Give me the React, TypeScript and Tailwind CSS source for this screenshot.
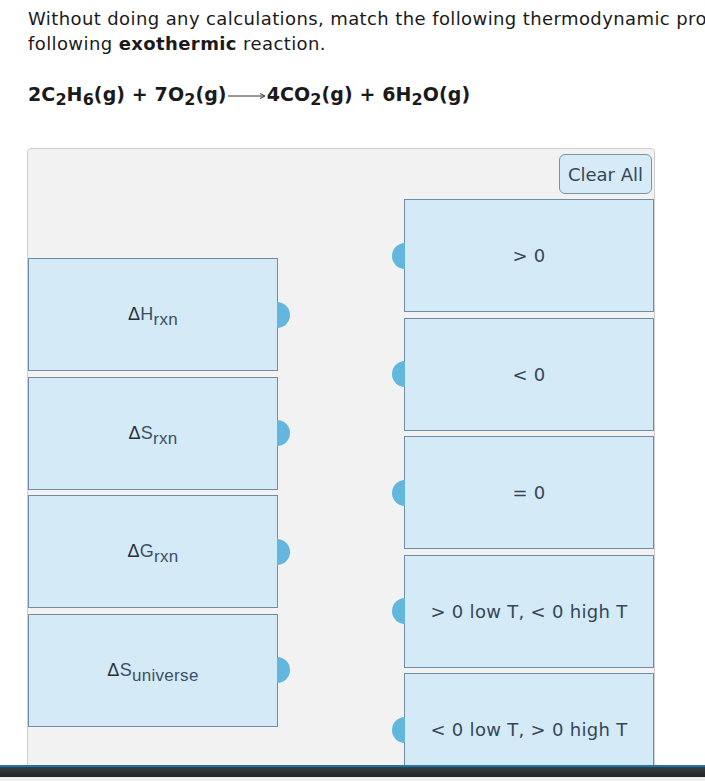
import React from "react";

type Label = { sym: string; sub: string };

const properties: Label[] = [
  { sym: "H", sub: "rxn" },
  { sym: "S", sub: "rxn" },
  { sym: "G", sub: "rxn" },
  { sym: "S", sub: "universe" },
];

const values = ["> 0", "< 0", "= 0", "> 0 low T, < 0 high T", "< 0 low T, > 0 high T"];

function Arrow() {
  return (
    <svg width="38" height="10" viewBox="0 0 38 10" className="inline-block mx-[1px] align-middle">
      <line x1="0" y1="5" x2="36" y2="5" stroke="#333" strokeWidth="1" />
      <path d="M32 2.5 L37 5 L32 7.5" fill="none" stroke="#333" strokeWidth="1" />
    </svg>
  );
}

function PropertyBox({ item }: { item: Label }) {
  return (
    <div className="relative h-[113px] w-[250px] border border-[#6f8ea3] bg-[#d4eaf7] flex items-center justify-center font-['Liberation_Sans',sans-serif] text-[18px] tracking-[0.3px] text-[#3b5067]">
      <span>
        <span className="text-[#2a2f36]">Δ</span>
        {item.sym}
        <sub className="text-[17px] -bottom-[0.3em]">{item.sub}</sub>
      </span>
      <span className="absolute left-full top-1/2 -translate-y-1/2 h-[26px] w-[13px] rounded-r-full bg-[#63b6de]" />
    </div>
  );
}

function ValueBox({ text }: { text: string }) {
  return (
    <div className="relative h-[113px] w-[250px] border border-[#6f8ea3] bg-[#d4eaf7] flex items-center justify-center text-[18px] tracking-[0.3px] text-[#34475a]">
      {text}
      <span className="absolute right-full top-1/2 -translate-y-1/2 h-[26px] w-[13px] rounded-l-full bg-[#63b6de]" />
    </div>
  );
}

export default function App() {
  return (
    <div className="relative h-[781px] overflow-hidden bg-white font-['DejaVu_Sans',sans-serif] text-[#1a1a1a]">
      <div className="pl-7 pt-[6px] text-[18px] leading-[25px] tracking-[0.4px] whitespace-nowrap">
        <p>Without doing any calculations, match the following thermodynamic properties with their signs for the</p>
        <p>
          following <b>exothermic</b> reaction.
        </p>
      </div>

      <p className="pl-7 mt-[26px] text-[19px] leading-[25px] tracking-[0.1px] font-bold whitespace-nowrap">
        2C<sub className="text-[16px]">2</sub>H<sub className="text-[16px]">6</sub>(g) + 7O
        <sub className="text-[16px]">2</sub>(g)
        <Arrow />
        4CO<sub className="text-[16px]">2</sub>(g) + 6H<sub className="text-[16px]">2</sub>O(g)
      </p>

      <div className="ml-[27px] mt-[41px] w-[628px] h-[640px] rounded-t border border-[#cfcfcf] bg-[#f2f2f2]">
        <div className="flex justify-end pt-[5px] pr-[2px]">
          <button className="h-[40px] w-[93px] rounded-[6px] border border-[#7596aa] bg-[#d6ebf7] text-[18px] text-[#34475a]">
            Clear All
          </button>
        </div>
        <div className="flex justify-between pt-[5px]">
          <div className="flex flex-col gap-[5.5px] pt-[59px]">
            {properties.map((p, i) => (
              <PropertyBox key={i} item={p} />
            ))}
          </div>
          <div className="flex flex-col gap-[5.5px]">
            {values.map((v) => (
              <ValueBox key={v} text={v} />
            ))}
          </div>
        </div>
      </div>

      <div className="fixed bottom-0 left-0 right-0 h-[16px] flex flex-col">
        <div className="h-[2px] bg-[#1d78a8]" />
        <div className="h-[10px] bg-gradient-to-b from-[#3a3f44] to-[#202224]" />
        <div className="flex-1 bg-[#efefef]" />
      </div>
    </div>
  );
}
